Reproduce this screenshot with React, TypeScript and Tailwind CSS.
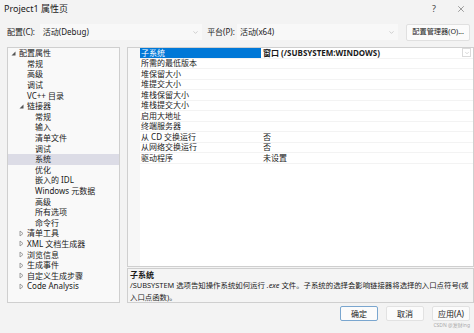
import { ChevronDown, X } from "lucide-react";

const font = { fontFamily: '"Noto Sans", "Noto Sans CJK SC", sans-serif' };

type TreeItem = { label: string; depth: number; arrow?: "open" | "closed"; selected?: boolean };

const tree: TreeItem[] = [
  { label: "配置属性", depth: 0, arrow: "open" },
  { label: "常规", depth: 1 },
  { label: "高级", depth: 1 },
  { label: "调试", depth: 1 },
  { label: "VC++ 目录", depth: 1 },
  { label: "链接器", depth: 1, arrow: "open" },
  { label: "常规", depth: 2 },
  { label: "输入", depth: 2 },
  { label: "清单文件", depth: 2 },
  { label: "调试", depth: 2 },
  { label: "系统", depth: 2, selected: true },
  { label: "优化", depth: 2 },
  { label: "嵌入的 IDL", depth: 2 },
  { label: "Windows 元数据", depth: 2 },
  { label: "高级", depth: 2 },
  { label: "所有选项", depth: 2 },
  { label: "命令行", depth: 2 },
  { label: "清单工具", depth: 1, arrow: "closed" },
  { label: "XML 文档生成器", depth: 1, arrow: "closed" },
  { label: "浏览信息", depth: 1, arrow: "closed" },
  { label: "生成事件", depth: 1, arrow: "closed" },
  { label: "自定义生成步骤", depth: 1, arrow: "closed" },
  { label: "Code Analysis", depth: 1, arrow: "closed" },
];

const props: [string, string][] = [
  ["子系统", "窗口 (/SUBSYSTEM:WINDOWS)"],
  ["所需的最低版本", ""],
  ["堆保留大小", ""],
  ["堆提交大小", ""],
  ["堆栈保留大小", ""],
  ["堆栈提交大小", ""],
  ["启用大地址", ""],
  ["终端服务器", ""],
  ["从 CD 交换运行", "否"],
  ["从网络交换运行", "否"],
  ["驱动程序", "未设置"],
];

function Combo({ text, width }: { text: string; width: string }) {
  return (
    <div className={`flex items-center justify-between h-[16px] bg-[#f8f8f8] pl-[3px] pr-[3px] whitespace-nowrap ${width}`}>
      <span>{text}</span>
      <ChevronDown size={7} strokeWidth={1.5} className="text-[#999]" />
    </div>
  );
}

function Arrow({ kind }: { kind?: "open" | "closed" }) {
  if (kind === "open")
    return (
      <svg width="7" height="7" viewBox="0 0 7 7" className="shrink-0">
        <path d="M5.5 1.5 L5.5 5.5 L1.5 5.5 Z" fill="#555" />
      </svg>
    );
  if (kind === "closed")
    return (
      <svg width="7" height="7" viewBox="0 0 7 7" className="shrink-0">
        <path d="M2 1 L5 3.5 L2 6 Z" fill="none" stroke="#888" strokeWidth="0.8" />
      </svg>
    );
  return <span className="w-[7px] shrink-0" />;
}

export default function App() {
  return (
    <div className="w-[474px] h-[333px] bg-[#f3f3f3] text-[#1a1a1a] text-[8px] leading-none overflow-hidden flex flex-col whitespace-nowrap" style={font}>
      {/* title bar */}
      <div className="h-[17px] flex items-center justify-between pl-[4px] pr-[8px]">
        <span className="text-[9px]">Project1 属性页</span>
        <div className="flex items-center gap-[20px] text-[#444]">
          <span className="text-[9px]">?</span>
          <X size={10} strokeWidth={1.2} />
        </div>
      </div>

      {/* config row */}
      <div className="h-[30px] flex items-center pl-[7px] pr-[4px]">
        <span className="w-[33px]">配置(C):</span>
        <Combo text="活动(Debug)" width="w-[163px]" />
        <span className="ml-[5px] w-[30px]">平台(P):</span>
        <Combo text="活动(x64)" width="w-[162px]" />
        <div className="ml-[8px] h-[17px] w-[64px] bg-[#fbfbfb] border border-[#e0e0e0] rounded-[2px] flex items-center justify-center text-[7.2px]">
          配置管理器(O)...
        </div>
      </div>

      {/* main */}
      <div className="flex pl-[7px] h-[256px]">
        <div className="w-[113px] bg-[#f9f9f9] border border-[#cfcfcf]">
          {tree.map((t, i) => (
            <div
              key={i}
              className={`h-[10.6px] flex items-center gap-[2px] ${t.selected ? "bg-[#dcdce6]" : ""}`}
              style={{ paddingLeft: 2 + t.depth * 8 }}
            >
              <Arrow kind={t.arrow} />
              <span>{t.label}</span>
            </div>
          ))}
        </div>

        <div className="ml-[7px] flex-1 flex flex-col">
          <div className="h-[221px] bg-white border border-[#cfcfcf] flex">
            <div className="w-[12px] bg-[#f7f7f7]" />
            <div className="flex-1">
              {props.map(([k, v], i) => (
                <div key={i} className="h-[10.5px] flex items-center border-b border-[#f3f3f3]">
                  <div className={`w-[121px] h-full flex items-center pl-[1px] ${i === 0 ? "bg-[#0078d7] text-white" : ""}`}>
                    {k}
                  </div>
                  <div className="flex-1 h-full flex items-center justify-between pl-[2px] pr-[2px]">
                    <span className={i === 0 ? "font-bold" : ""}>{v}</span>
                    {i === 0 && (
                      <span className="w-[9px] h-[9px] border border-[#dadada] flex items-center justify-center">
                        <ChevronDown size={6} strokeWidth={1.5} className="text-[#999]" />
                      </span>
                    )}
                  </div>
                </div>
              ))}
            </div>
          </div>
          <div className="mt-[1px] h-[35px] bg-[#f4f4f4] border border-[#cfcfcf] px-[2px]">
            <div className="font-bold leading-[11px]">子系统</div>
            <div className="text-[7.4px] leading-[11.5px]">
              <div>
                /SUBSYSTEM 选项告知操作系统如何运行 <i>.exe</i> 文件。子系统的选择会影响链接器将选择的入口点符号(或
              </div>
              <div>入口点函数)。</div>
            </div>
          </div>
        </div>
      </div>

      {/* buttons */}
      <div className="flex-1 flex items-start justify-end pr-[4px] pt-[3px] gap-[8px] relative">
        <div className="w-[38px] h-[15px] bg-[#fbfbfb] border border-[#7aa6cf] rounded-[2px] flex items-center justify-center">确定</div>
        <div className="w-[38px] h-[15px] bg-[#fbfbfb] border border-[#e2e2e2] rounded-[2px] flex items-center justify-center">取消</div>
        <div className="w-[38px] h-[15px] bg-[#fbfbfb] border border-[#e2e2e2] rounded-[2px] flex items-center justify-center">应用(A)</div>
        <span className="absolute right-[4px] bottom-[5px] text-[5px] text-[#aaa]">CSDN @发财ing</span>
      </div>
    </div>
  );
}
